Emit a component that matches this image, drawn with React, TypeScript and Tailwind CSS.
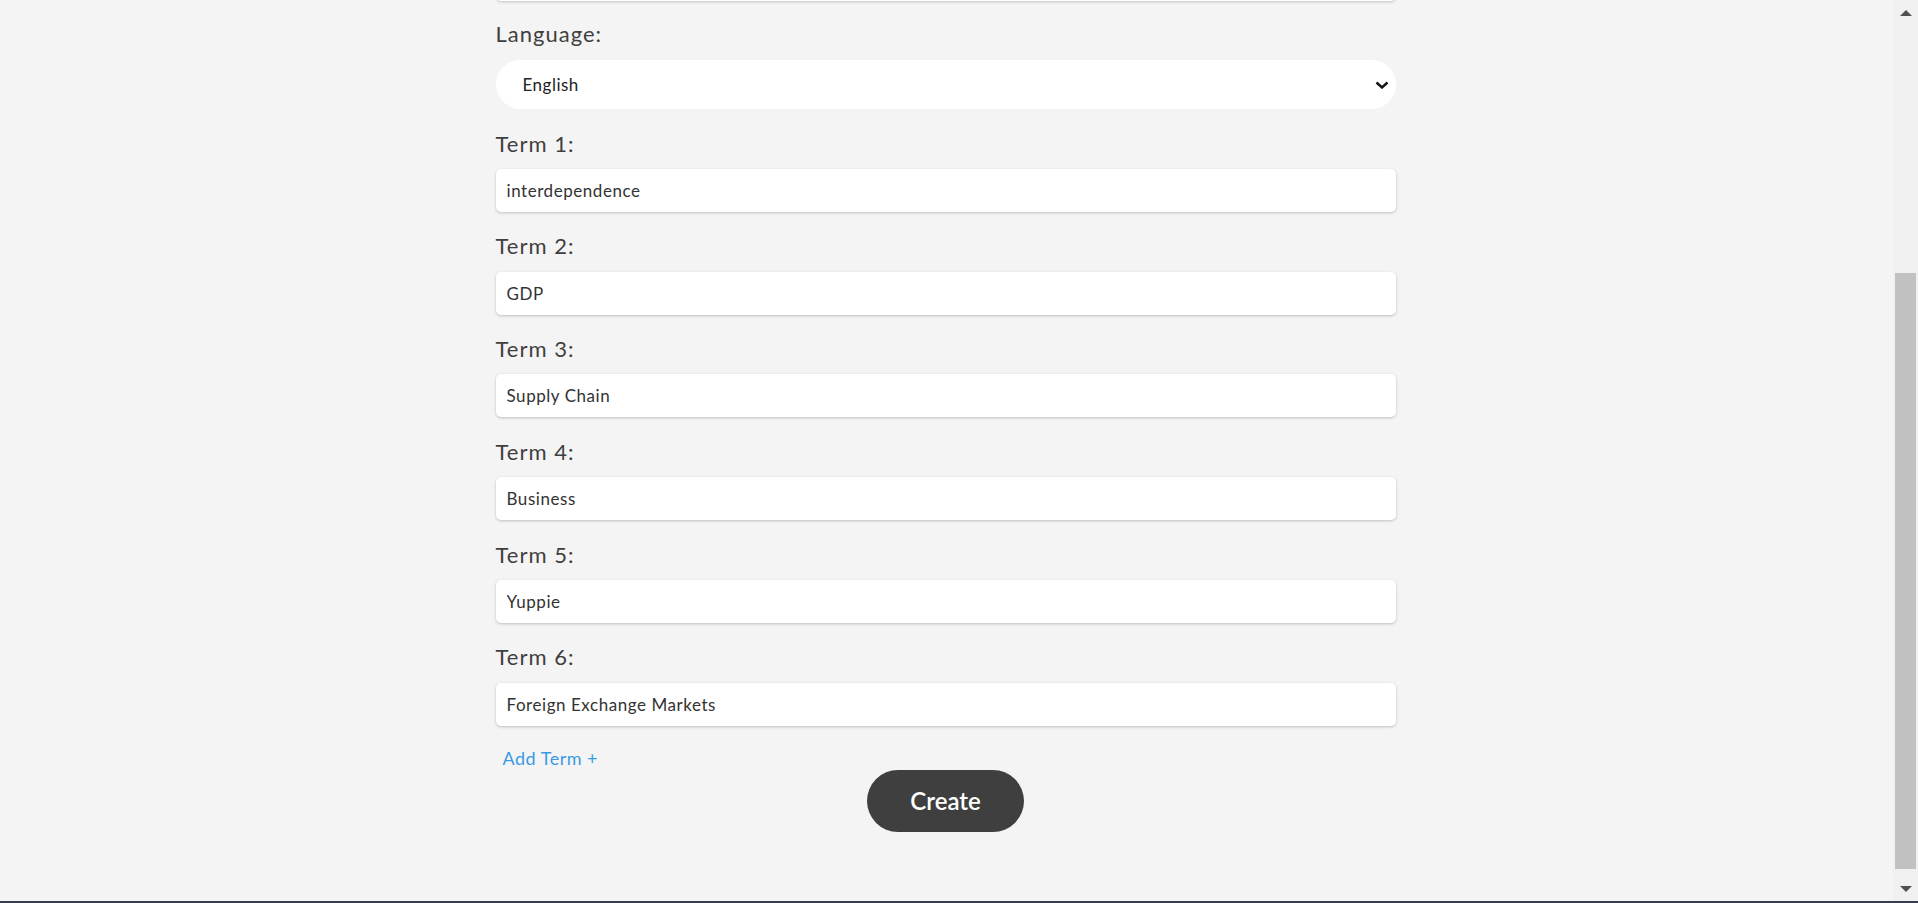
import { ChangeEvent, useState } from 'react';

const initialTerms = [
  'interdependence',
  'GDP',
  'Supply Chain',
  'Business',
  'Yuppie',
  'Foreign Exchange Markets',
];

function Scrollbar() {
  return (
    <div className="flex w-[25px] shrink-0 flex-col bg-[#f0f0f0]">
      <div className="flex h-[25px] items-center justify-center pl-[1px]">
        <div className="h-0 w-0 border-x-[6px] border-b-[6px] border-x-transparent border-b-[#505050]" />
      </div>
      <div className="h-[248px]" />
      <div className="mx-[2px] h-[596px] bg-[#c1c1c1]" />
      <div className="flex flex-1 items-end justify-center pb-[9px] pl-[1px]">
        <div className="h-0 w-0 border-x-[6px] border-t-[6px] border-x-transparent border-t-[#505050]" />
      </div>
    </div>
  );
}

export default function App() {
  const [terms, setTerms] = useState(initialTerms);
  const [language, setLanguage] = useState('English');

  const updateTerm = (i: number) => (e: ChangeEvent<HTMLInputElement>) => {
    const next = [...terms];
    next[i] = e.target.value;
    setTerms(next);
  };

  return (
    <div className="flex h-[903px] flex-col overflow-hidden bg-[#f4f4f4] font-['Lato','Liberation_Sans',sans-serif]">
      <div className="flex min-h-0 flex-1">
        <main className="min-w-0 flex-1 overflow-hidden pr-[2px]">
          <form className="mx-auto w-[900px]" onSubmit={(e) => e.preventDefault()}>
            {/* tail of the field above */}
            <div className="-mt-[42px] mb-[19px] h-[43px] rounded-[5px] bg-white shadow-[0_1px_3px_rgba(0,0,0,0.2)]" />

            {/* Language */}
            <label className="mb-[12px] block text-[22px] leading-[28px] tracking-[1px] text-[#3f3f3f]">
              Language:
            </label>
            <div className="relative mb-[20.5px]">
              <select
                value={language}
                onChange={(e) => setLanguage(e.target.value)}
                className="h-[49px] w-full appearance-none rounded-full bg-white pl-[27px] text-[17px] tracking-[0.5px] text-[#222] outline-none"
              >
                <option>English</option>
                <option>Spanish</option>
                <option>French</option>
              </select>
              <svg
                className="pointer-events-none absolute right-[7px] top-[21px]"
                width="14"
                height="8"
                viewBox="0 0 14 8"
                fill="none"
              >
                <path d="M1.5 1.5 L7 6.5 L12.5 1.5" stroke="#111" strokeWidth="2.4" />
              </svg>
            </div>

            {/* Terms */}
            {terms.map((term, i) => (
              <div key={i} className="mb-[20.5px]">
                <label className="mb-[11.25px] block text-[22px] leading-[28px] tracking-[1px] text-[#3f3f3f]">
                  Term {i + 1}:
                </label>
                <input
                  value={term}
                  onChange={updateTerm(i)}
                  className="block h-[43px] w-full rounded-[5px] bg-white px-[11px] text-[17px] tracking-[0.55px] text-[#333] shadow-[0_1px_3px_rgba(0,0,0,0.22)] outline-none"
                />
              </div>
            ))}

            <button
              type="button"
              onClick={() => setTerms([...terms, ''])}
              className="mt-[5px] block pl-[7px] text-[18px] leading-[24px] tracking-[0.5px] text-[#3a9be2]"
            >
              Add Term +
            </button>

            <div className="flex justify-center">
              <button
                type="submit"
                className="h-[62px] w-[157px] rounded-full bg-[#3f3f3f] text-[24px] font-semibold text-white"
              >
                Create
              </button>
            </div>
          </form>
        </main>
        <Scrollbar />
      </div>
      <div className="h-[2px] bg-[#363d4f]" />
    </div>
  );
}
